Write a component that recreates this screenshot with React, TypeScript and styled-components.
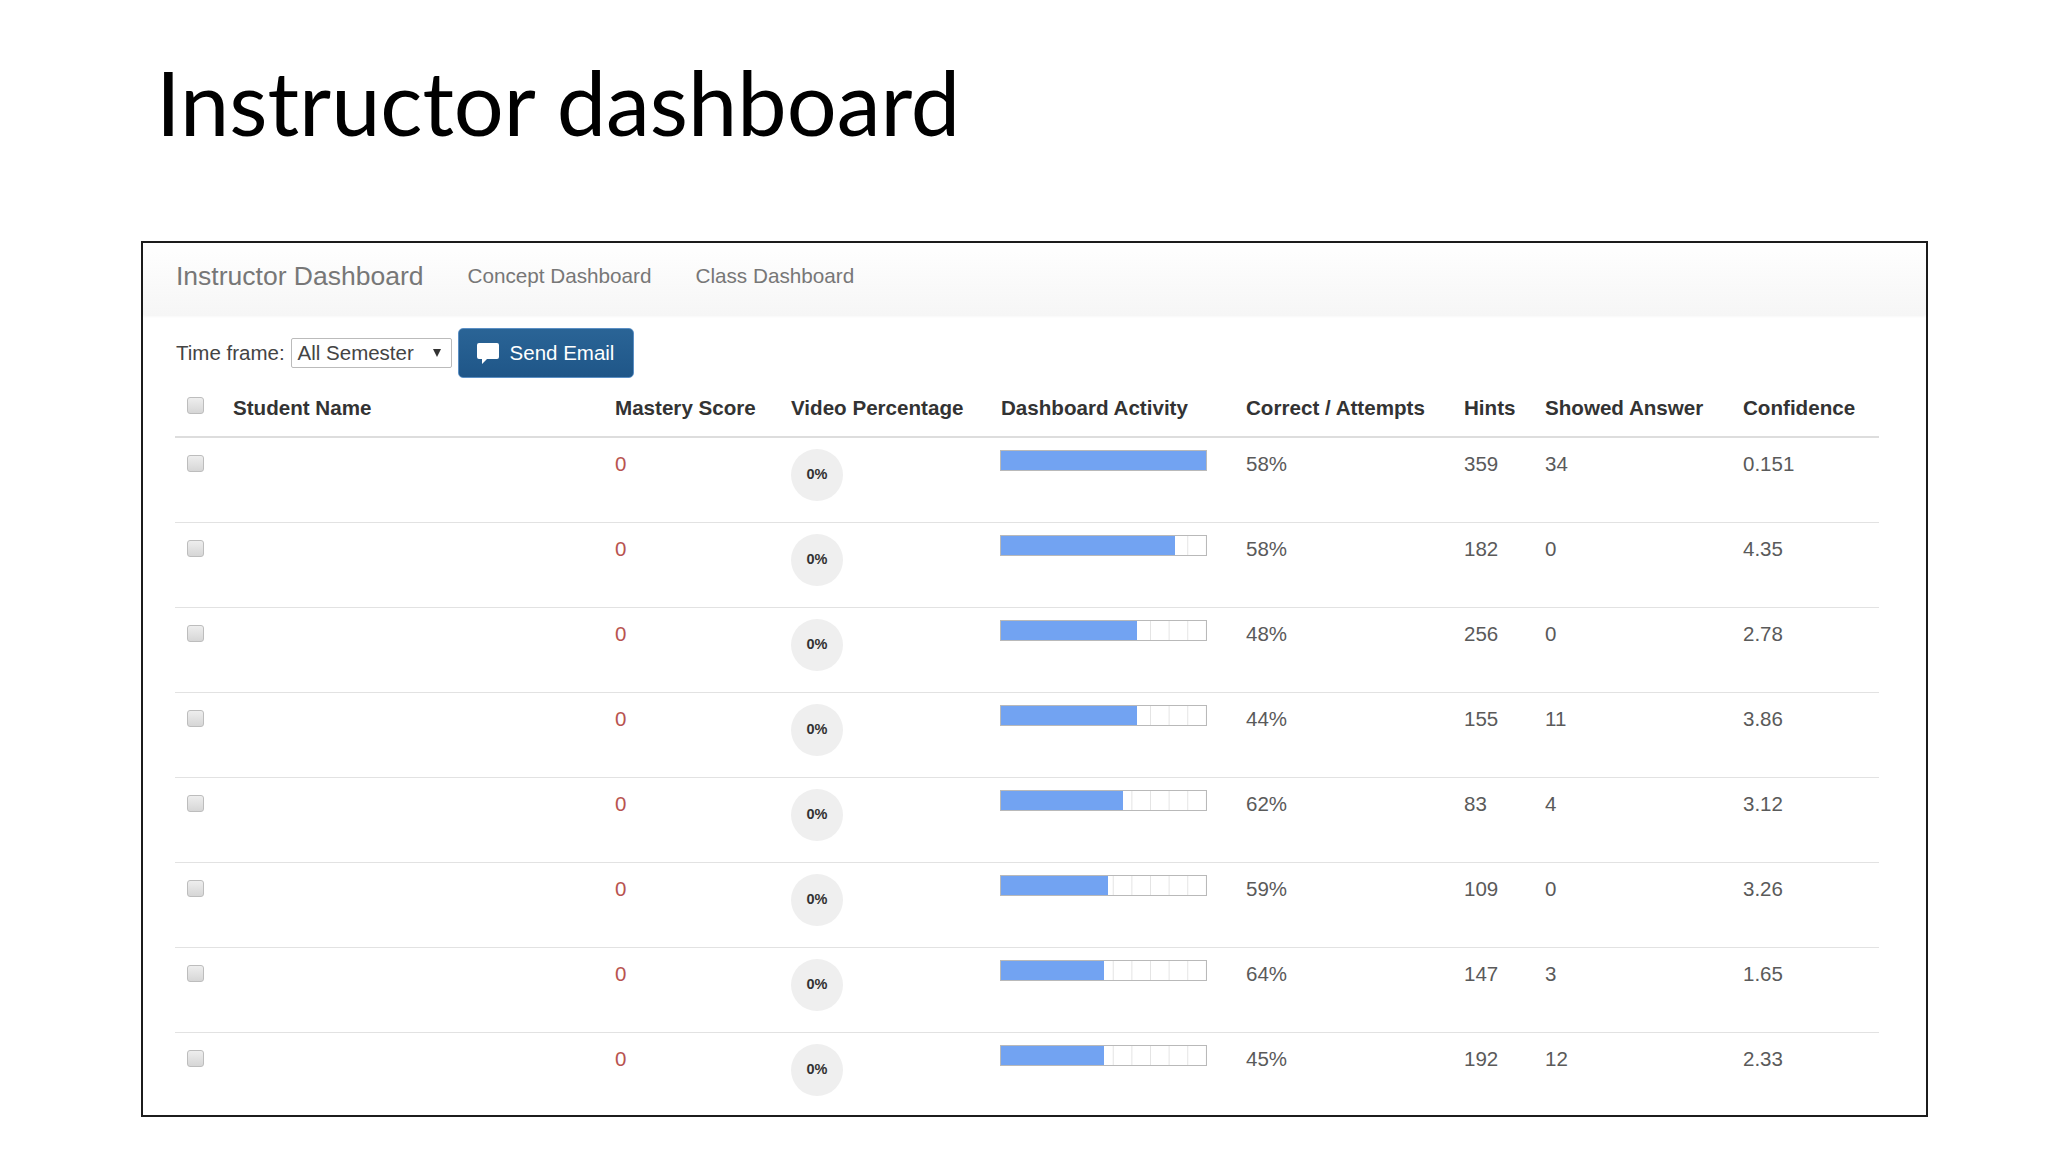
import React from 'react';
import styled, { createGlobalStyle } from 'styled-components';

const GlobalStyle = createGlobalStyle`
  html, body {
    margin: 0;
    padding: 0;
    background: #fff;
  }
`;

const COLUMNS = '58px 382px 176px 210px 245px 218px 81px 198px 136px';

const StyledSlide = styled.div`
  width: 2048px;
  height: 1152px;
  overflow: hidden;
  background: #fff;
  font-family: 'Liberation Sans', Arial, sans-serif;
`;

const StyledTitle = styled.h1`
  margin: 0;
  height: 241px;
  padding: 50px 0 0 156px;
  box-sizing: border-box;
  font-family: Lato, 'Open Sans', sans-serif;
  font-weight: 400;
  font-size: 88.2px;
  line-height: 104px;
  color: #000;
`;

const StyledPanel = styled.div`
  width: 1787px;
  height: 876px;
  margin-left: 141px;
  box-sizing: border-box;
  border: 2px solid #1c1c1c;
`;

const StyledNavbar = styled.div`
  height: 72px;
  box-sizing: border-box;
  padding: 0 0 6px 33px;
  display: flex;
  align-items: center;
  background: linear-gradient(#ffffff, #f6f6f6);
  box-shadow: 0 1px 3px rgba(0, 0, 0, 0.06);
`;

const StyledBrand = styled.span`
  font-size: 26.5px;
  color: #777;
  margin-right: 44px;
`;

const StyledNavLink = styled.span`
  font-size: 20.7px;
  color: #777;
  margin-right: 44px;
`;

const StyledContent = styled.div`
  padding: 13px 0 0 33px;
`;

const StyledToolbar = styled.div`
  height: 50px;
  display: flex;
  align-items: center;
  font-size: 20.5px;
  color: #444;
`;

const StyledSelect = styled.div`
  width: 161px;
  height: 30px;
  margin: 0 6px 0 6px;
  padding: 0 8px 0 6px;
  box-sizing: border-box;
  display: flex;
  align-items: center;
  justify-content: space-between;
  background: #fff;
  border: 1px solid #bbb;
  border-radius: 2px;
  color: #444;
`;

const StyledCaret = styled.span`
  width: 0;
  height: 0;
  margin-right: 2px;
  border-left: 4px solid transparent;
  border-right: 4px solid transparent;
  border-top: 8px solid #333;
`;

const StyledButton = styled.button`
  width: 176px;
  height: 50px;
  padding: 0 0 0 18px;
  display: flex;
  align-items: center;
  gap: 11px;
  font-family: inherit;
  font-size: 20.5px;
  color: #fff;
  background: linear-gradient(#2a6496, #1f5688);
  border: 1px solid #5b8fc4;
  border-radius: 5px;
`;

const StyledTable = styled.div`
  width: 1704px;
  margin: 7px 0 0 -1px;
`;

const StyledHeadRow = styled.div`
  height: 53px;
  box-sizing: border-box;
  padding-bottom: 5px;
  display: grid;
  grid-template-columns: ${COLUMNS};
  align-items: center;
  font-size: 20.6px;
  font-weight: 700;
  color: #333;
  border-bottom: 2px solid #ddd;
`;

const StyledRow = styled.div`
  height: 85px;
  box-sizing: border-box;
  padding-top: 12px;
  display: grid;
  grid-template-columns: ${COLUMNS};
  align-items: start;
  font-size: 20.5px;
  line-height: 28px;
  color: #5a5a5a;
  border-bottom: 1px solid #e2e2e2;

  &:last-child {
    border-bottom: none;
  }
`;

const StyledCheckbox = styled.span<{ $head?: boolean }>`
  display: block;
  width: 17px;
  height: 17px;
  margin: ${(p) => (p.$head ? '-6px 0 0 12px' : '5px 0 0 12px')};
  box-sizing: border-box;
  background: linear-gradient(#eeeeee, #d6d6d6);
  border: 1px solid #bdbdbd;
  border-radius: 3px;
`;

const StyledScore = styled.span`
  color: #b85450;
`;

const StyledCircle = styled.div`
  width: 52px;
  height: 52px;
  margin-top: -1px;
  padding-bottom: 2px;
  box-sizing: border-box;
  display: flex;
  align-items: center;
  justify-content: center;
  border-radius: 50%;
  background: #efefef;
  font-size: 14.5px;
  font-weight: 700;
  color: #333;
`;

const StyledBar = styled.div`
  width: 207px;
  height: 21px;
  margin-left: -1px;
  box-sizing: border-box;
  background-color: #fff;
  background-image: linear-gradient(to right, #e4e4e4 1px, transparent 1px);
  background-size: calc(100% / 11) 100%;
  border: 1px solid #b9b9b9;
`;

const StyledBarFill = styled.div`
  height: 100%;
  background: #72a3f2;
`;

const students = [
  { activity: 100, correct: '58%', hints: '359', showed: '34', confidence: '0.151' },
  { activity: 85, correct: '58%', hints: '182', showed: '0', confidence: '4.35' },
  { activity: 66.5, correct: '48%', hints: '256', showed: '0', confidence: '2.78' },
  { activity: 66.5, correct: '44%', hints: '155', showed: '11', confidence: '3.86' },
  { activity: 59.5, correct: '62%', hints: '83', showed: '4', confidence: '3.12' },
  { activity: 52, correct: '59%', hints: '109', showed: '0', confidence: '3.26' },
  { activity: 50, correct: '64%', hints: '147', showed: '3', confidence: '1.65' },
  { activity: 50, correct: '45%', hints: '192', showed: '12', confidence: '2.33' },
];

const App = () => {
  return (
    <StyledSlide>
      <GlobalStyle />
      <StyledTitle>Instructor dashboard</StyledTitle>
      <StyledPanel>
        <StyledNavbar>
          <StyledBrand>Instructor Dashboard</StyledBrand>
          <StyledNavLink>Concept Dashboard</StyledNavLink>
          <StyledNavLink>Class Dashboard</StyledNavLink>
        </StyledNavbar>
        <StyledContent>
          <StyledToolbar>
            Time frame:
            <StyledSelect>
              All Semester
              <StyledCaret />
            </StyledSelect>
            <StyledButton>
              <svg width='22' height='21' viewBox='0 0 22 21' fill='#fff'>
                <path d='M2 0h18a2 2 0 0 1 2 2v12a2 2 0 0 1-2 2H10l-5 5v-5H2a2 2 0 0 1-2-2V2a2 2 0 0 1 2-2z' />
              </svg>
              Send Email
            </StyledButton>
          </StyledToolbar>
          <StyledTable>
            <StyledHeadRow>
              <StyledCheckbox $head />
              <span>Student Name</span>
              <span>Mastery Score</span>
              <span>Video Percentage</span>
              <span>Dashboard Activity</span>
              <span>Correct / Attempts</span>
              <span>Hints</span>
              <span>Showed Answer</span>
              <span>Confidence</span>
            </StyledHeadRow>
            {students.map((student, index) => (
              <StyledRow key={index}>
                <StyledCheckbox />
                <span />
                <StyledScore>0</StyledScore>
                <StyledCircle>0%</StyledCircle>
                <StyledBar>
                  <StyledBarFill style={{ width: `${student.activity}%` }} />
                </StyledBar>
                <span>{student.correct}</span>
                <span>{student.hints}</span>
                <span>{student.showed}</span>
                <span>{student.confidence}</span>
              </StyledRow>
            ))}
          </StyledTable>
        </StyledContent>
      </StyledPanel>
    </StyledSlide>
  );
};

export default App;
